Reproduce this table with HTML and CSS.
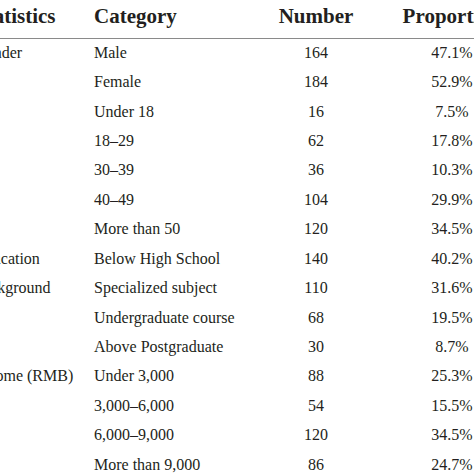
FILE: index.html
```html
<!DOCTYPE html>
<html lang="en">
<head>
  <meta charset="UTF-8" />
  <title>Sample statistics</title>
  <link rel="stylesheet" href="styles.css">
</head>
<body>
  <table class="stats">
    <thead>
      <tr><th class="stat">Statistics</th><th class="cat">Category</th><th class="num">Number</th><th class="prop">Proportion</th></tr>
    </thead>
    <tbody>
      <tr><td class="stat">Gender</td><td class="cat">Male</td><td class="num">164</td><td class="prop">47.1%</td></tr>
      <tr><td class="stat"></td><td class="cat">Female</td><td class="num">184</td><td class="prop">52.9%</td></tr>
      <tr><td class="stat"></td><td class="cat">Under 18</td><td class="num">16</td><td class="prop">7.5%</td></tr>
      <tr><td class="stat"></td><td class="cat">18–29</td><td class="num">62</td><td class="prop">17.8%</td></tr>
      <tr><td class="stat"></td><td class="cat">30–39</td><td class="num">36</td><td class="prop">10.3%</td></tr>
      <tr><td class="stat"></td><td class="cat">40–49</td><td class="num">104</td><td class="prop">29.9%</td></tr>
      <tr><td class="stat"></td><td class="cat">More than 50</td><td class="num">120</td><td class="prop">34.5%</td></tr>
      <tr><td class="stat">Education</td><td class="cat">Below High School</td><td class="num">140</td><td class="prop">40.2%</td></tr>
      <tr><td class="stat">background</td><td class="cat">Specialized subject</td><td class="num">110</td><td class="prop">31.6%</td></tr>
      <tr><td class="stat"></td><td class="cat">Undergraduate course</td><td class="num">68</td><td class="prop">19.5%</td></tr>
      <tr><td class="stat"></td><td class="cat">Above Postgraduate</td><td class="num">30</td><td class="prop">8.7%</td></tr>
      <tr><td class="stat">Income (RMB)</td><td class="cat">Under 3,000</td><td class="num">88</td><td class="prop">25.3%</td></tr>
      <tr><td class="stat"></td><td class="cat">3,000–6,000</td><td class="num">54</td><td class="prop">15.5%</td></tr>
      <tr><td class="stat"></td><td class="cat">6,000–9,000</td><td class="num">120</td><td class="prop">34.5%</td></tr>
      <tr><td class="stat"></td><td class="cat">More than 9,000</td><td class="num">86</td><td class="prop">24.7%</td></tr>
    </tbody>
  </table>
</body>
</html>
```

FILE: styles.css
```css
* {
  margin: 0;
  padding: 0;
  box-sizing: border-box;
}

html, body {
  width: 474px;
  height: 474px;
  overflow: hidden;
  background: #fff;
}

body {
  font-family: 'Liberation Serif', 'Times New Roman', serif;
  color: #231f20;
}

.stats {
  border-collapse: collapse;
  table-layout: fixed;
  width: 563px;
  margin-left: -25px;
}

.stats th,
.stats td {
  padding: 0;
  white-space: nowrap;
  overflow: visible;
}

.stats th {
  font-size: 21px;
  font-weight: 700;
  height: 38px;
  vertical-align: middle;
  padding-bottom: 4px;
  border-bottom: 1px solid #8a8a8a;
}

.stats td {
  font-size: 16px;
  height: 29.43px;
  vertical-align: middle;
}

.stat { width: 119px; text-align: left; }
.cat { width: 172px; text-align: left; }
.num { width: 100px; text-align: center; }
.prop { width: 172px; text-align: center; }
```
